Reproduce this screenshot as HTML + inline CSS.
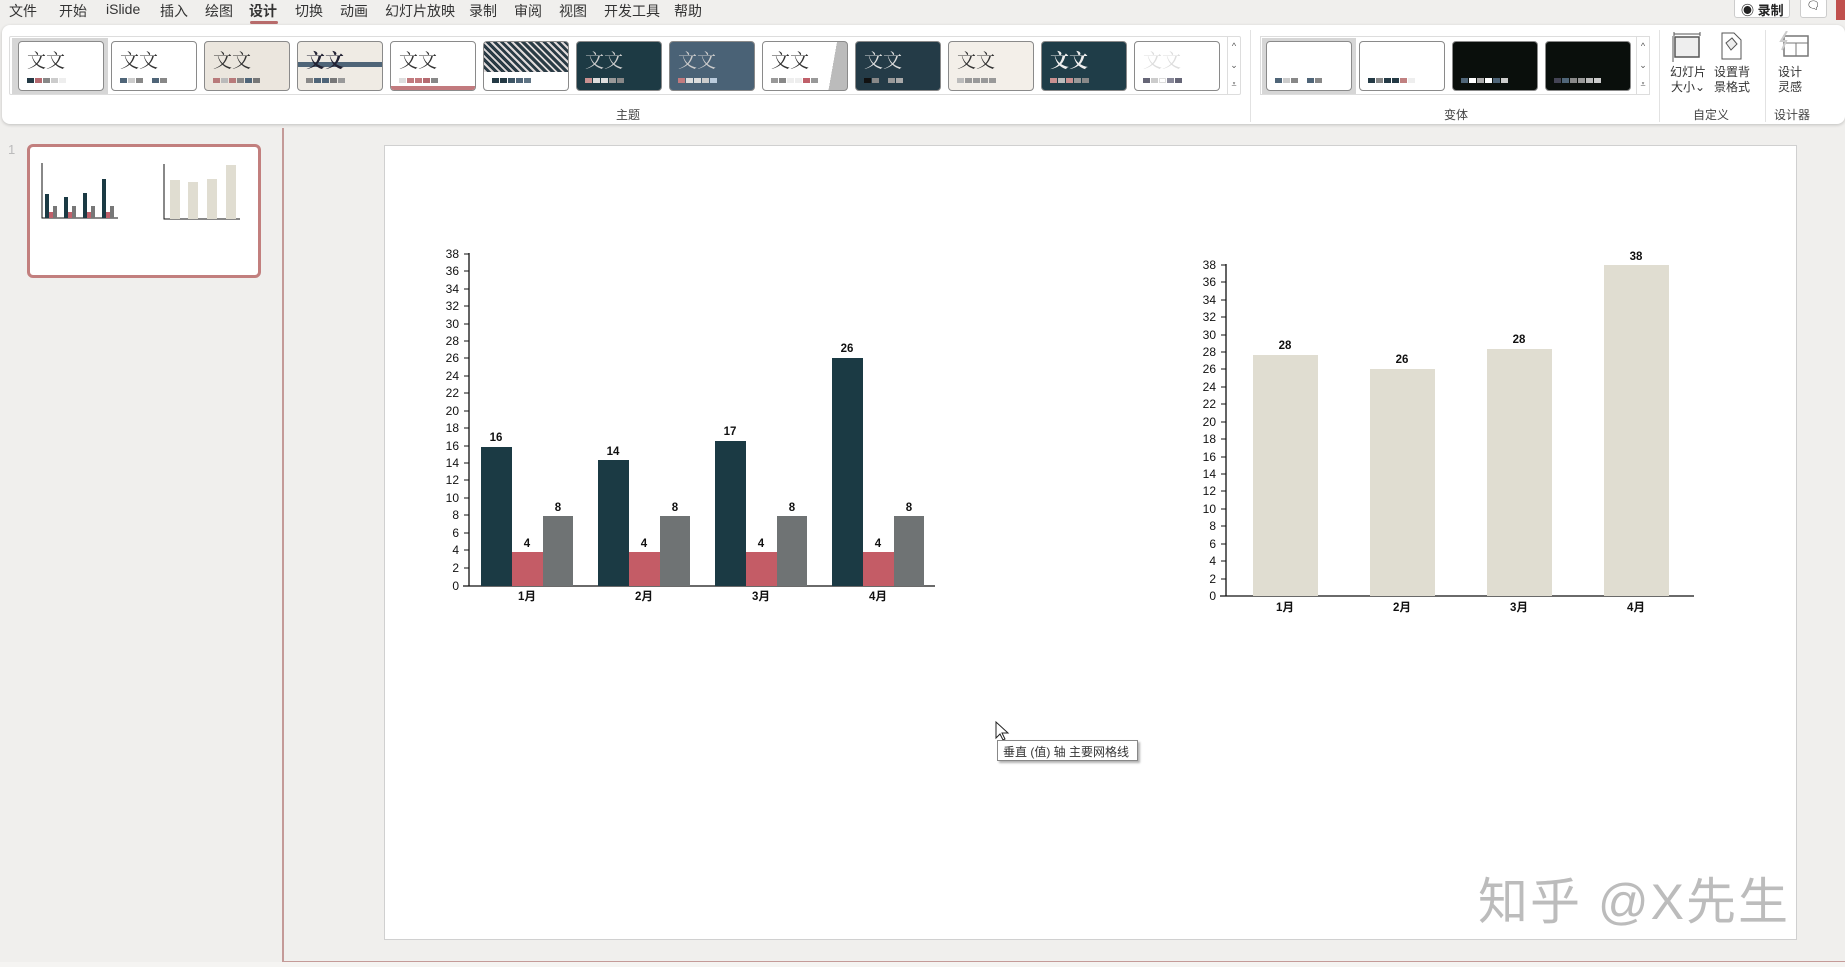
<!DOCTYPE html>
<html><head><meta charset="utf-8"><style>
*{margin:0;padding:0;box-sizing:border-box}
body{width:1845px;height:967px;overflow:hidden;background:#f0efed;font-family:"Liberation Sans","Noto Sans CJK SC",sans-serif;position:relative;color:#222}
.a{position:absolute}
.tab{position:absolute;top:1px;font-size:14px;color:#333;white-space:nowrap}
.th{position:absolute;top:41px;width:86px;height:50px;border:1px solid #8a8a8a;border-radius:4px;overflow:hidden;background:#fff}
.th .t{position:absolute;left:8px;top:4px;font-family:"Noto Serif CJK SC",serif;font-size:19px;color:#333}
.th .s{position:absolute;left:8px;top:36px;height:5px;display:flex;gap:1px}
.th .s i{display:block;width:7px;height:5px}
.gl{position:absolute;top:106px;font-size:12px;color:#444}
.sm{position:absolute;font-size:12px;color:#333;line-height:15px;text-align:center}
</style></head><body>
<!-- menu -->
<div class="tab" style="left:9px">文件</div>
<div class="tab" style="left:59px">开始</div>
<div class="tab" style="left:106px">iSlide</div>
<div class="tab" style="left:160px">插入</div>
<div class="tab" style="left:205px">绘图</div>
<div class="tab" style="left:249px;font-weight:bold">设计</div>
<div class="a" style="left:250px;top:21px;width:28px;height:3px;background:#b86b6b;border-radius:2px"></div>
<div class="tab" style="left:295px">切换</div>
<div class="tab" style="left:340px">动画</div>
<div class="tab" style="left:385px">幻灯片放映</div>
<div class="tab" style="left:469px">录制</div>
<div class="tab" style="left:514px">审阅</div>
<div class="tab" style="left:559px">视图</div>
<div class="tab" style="left:604px">开发工具</div>
<div class="tab" style="left:674px">帮助</div>
<div class="a" style="left:1734px;top:-2px;width:56px;height:20px;border:1px solid #ccc;border-radius:3px;background:#fff;font-size:13px;font-weight:bold;padding:1px 0 0 6px">◉ 录制</div>
<div class="a" style="left:1800px;top:-2px;width:27px;height:20px;border:1px solid #ccc;border-radius:3px;background:#fff;font-size:11px;text-align:center">🗨</div>
<div class="a" style="left:1836px;top:0;width:9px;height:20px;background:#c0504d"></div>
<!-- ribbon -->
<div class="a" style="left:2px;top:25px;width:1843px;height:99px;background:#fff;border-radius:8px;box-shadow:0 1px 3px rgba(0,0,0,.2)"></div>
<div class="a" style="left:9px;top:36px;width:1232px;height:59px;border:1px solid #ddd;border-radius:2px"></div>
<div class="a" style="left:12px;top:38px;width:96px;height:56px;background:#d6d6d6"></div>
<div class="th" style="left:18px"><span class="t">文文</span><span class="s"><i style="background:#243a45"></i><i style="background:#b56a70"></i><i style="background:#888"></i><i style="background:#ccc"></i><i style="background:#eee"></i></span></div>
<div class="th" style="left:111px"><span class="t">文文</span><span class="s"><i style="background:#4f6578"></i><i style="background:#ccc"></i><i style="background:#888"></i><i style="background:#fff"></i><i style="background:#4f6578"></i><i style="background:#888"></i></span></div>
<div class="th" style="left:204px;background:#ebe6de"><span class="t">文文</span><span class="s"><i style="background:#b87a7a"></i><i style="background:#bbb"></i><i style="background:#b87a7a"></i><i style="background:#888"></i><i style="background:#4f6578"></i><i style="background:#777"></i></span></div>
<div class="th" style="left:297px;background:#efebe4"><div class="a" style="left:0;top:20px;width:86px;height:5px;background:#4f6578"></div><span class="t" style="font-weight:bold;color:#223">文文</span><span class="s"><i style="background:#888"></i><i style="background:#4f6578"></i><i style="background:#4f6578"></i><i style="background:#777"></i><i style="background:#999"></i></span></div>
<div class="th" style="left:390px"><div class="a" style="left:0;bottom:0;width:86px;height:4px;background:#c27a7e"></div><span class="t">文文</span><span class="s"><i style="background:#ddd"></i><i style="background:#c27a7e"></i><i style="background:#c27a7e"></i><i style="background:#b56a70"></i><i style="background:#888"></i></span></div>
<div class="th" style="left:483px;background:repeating-linear-gradient(45deg,#2a3b45 0 3px,#e0dada 3px 5px),#ccc"><div class="a" style="left:0;top:30px;width:86px;height:20px;background:#fff"></div><span class="s"><i style="background:#243a45"></i><i style="background:#243a45"></i><i style="background:#3d5565"></i><i style="background:#4f6578"></i><i style="background:#607585"></i></span></div>
<div class="th" style="left:576px;background:#1d3a44"><span class="t" style="color:#ccc">文文</span><span class="s"><i style="background:#c89090"></i><i style="background:#ddd"></i><i style="background:#ddd"></i><i style="background:#999"></i><i style="background:#888"></i></span></div>
<div class="th" style="left:669px;background:#4a6276"><span class="t" style="color:#ccc">文文</span><span class="s"><i style="background:#c27a7e"></i><i style="background:#ddd"></i><i style="background:#ddd"></i><i style="background:#ccc"></i><i style="background:#bcd"></i></span></div>
<div class="th" style="left:762px;background:linear-gradient(100deg,#fff 80%,#bbb 80%)"><span class="t">文文</span><span class="s"><i style="background:#999"></i><i style="background:#888"></i><i style="background:#eee"></i><i style="background:#eee"></i><i style="background:#c0606a"></i><i style="background:#999"></i></span></div>
<div class="th" style="left:855px;background:#243b47"><span class="t" style="color:#ddd">文文</span><span class="s"><i style="background:#111"></i><i style="background:#888"></i><i style="background:#243b47"></i><i style="background:#999"></i><i style="background:#aaa"></i></span></div>
<div class="th" style="left:948px;background:#f3efe9"><span class="t">文文</span><span class="s"><i style="background:#bbb"></i><i style="background:#999"></i><i style="background:#999"></i><i style="background:#999"></i><i style="background:#999"></i></span></div>
<div class="th" style="left:1041px;background:#1f3d48"><span class="t" style="color:#eee;font-weight:bold">文文</span><span class="s"><i style="background:#c89090"></i><i style="background:#bbb"></i><i style="background:#c89090"></i><i style="background:#999"></i><i style="background:#888"></i></span></div>
<div class="th" style="left:1134px"><span class="t" style="color:#ddd">文文</span><span class="s"><i style="background:#667"></i><i style="background:#ccc"></i><i style="background:#fff;border:1px solid #ddd"></i><i style="background:#889"></i><i style="background:#667"></i></span></div>
<div class="a" style="left:1227px;top:37px;width:13px;height:57px;border-left:1px solid #ddd;font-size:9px;color:#555;line-height:19px;text-align:center">^<br>⌄<br>⩡</div>
<div class="gl" style="left:616px">主题</div>
<div class="a" style="left:1250px;top:30px;width:1px;height:92px;background:#e2e2e2"></div>
<div class="a" style="left:1260px;top:36px;width:390px;height:59px;border:1px solid #ddd"></div>
<div class="a" style="left:1262px;top:38px;width:94px;height:56px;background:#d6d6d6"></div>
<div class="th" style="left:1266px"><span class="s"><i style="background:#4f6578"></i><i style="background:#ccc"></i><i style="background:#888"></i><i style="background:#fff"></i><i style="background:#4f6578"></i><i style="background:#888"></i></span></div>
<div class="th" style="left:1359px"><span class="s"><i style="background:#243a45"></i><i style="background:#888"></i><i style="background:#243a45"></i><i style="background:#243a45"></i><i style="background:#c08080"></i><i style="background:#eee"></i></span></div>
<div class="th" style="left:1452px;background:#0a0f0c"><span class="s"><i style="background:#4f6578"></i><i style="background:#fff"></i><i style="background:#aaa"></i><i style="background:#fff"></i><i style="background:#4f6578"></i><i style="background:#ccc"></i></span></div>
<div class="th" style="left:1545px;background:#0a0f0c"><span class="s"><i style="background:#445"></i><i style="background:#4f6578"></i><i style="background:#888"></i><i style="background:#999"></i><i style="background:#bbb"></i><i style="background:#ccc"></i></span></div>
<div class="a" style="left:1636px;top:37px;width:13px;height:57px;border-left:1px solid #ddd;font-size:9px;color:#555;line-height:19px;text-align:center">^<br>⌄<br>⩡</div>
<div class="gl" style="left:1444px">变体</div>
<div class="a" style="left:1659px;top:30px;width:1px;height:92px;background:#e2e2e2"></div>
<svg class="a" style="left:1672px;top:32px" width="30" height="30"><rect x="3" y="5" width="24" height="20" fill="#eee" stroke="#555" stroke-width="1.5"/><path d="M2 2h26M2 0v4M28 0v4M1 4v26" stroke="#555" fill="none"/></svg>
<svg class="a" style="left:1718px;top:31px" width="26" height="30"><path d="M4 2h12l7 7v19H4z" fill="#fff" stroke="#555"/><path d="M8 12l6-5 5 6-6 6z" fill="#eee" stroke="#555"/></svg>
<div class="sm" style="left:1670px;top:65px">幻灯片<br>大小⌄</div>
<div class="sm" style="left:1714px;top:65px">设置背<br>景格式</div>
<div class="gl" style="left:1693px">自定义</div>
<div class="a" style="left:1765px;top:30px;width:1px;height:92px;background:#e2e2e2"></div>
<svg class="a" style="left:1778px;top:31px" width="32" height="30"><rect x="6" y="5" width="24" height="20" fill="#fff" stroke="#777" stroke-width="1.5"/><path d="M6 12h24M18 12v13" stroke="#777"/><path d="M9 0l-6 10h5l-4 9" stroke="#ccc" stroke-width="2" fill="none"/></svg>
<div class="sm" style="left:1778px;top:65px">设计<br>灵感</div>
<div class="gl" style="left:1774px">设计器</div>
<!-- left panel -->
<div class="a" style="left:8px;top:142px;font-size:13px;color:#bbb">1</div>
<div class="a" style="left:282px;top:128px;width:1.5px;height:833px;background:#c49a98"></div>
<div class="a" style="left:27px;top:144px;width:234px;height:134px;border:3px solid #c27f7e;border-radius:6px;background:#fff"></div>
<svg class="a" style="left:40px;top:160px" width="210" height="60">
<path d="M2 3v55h76" stroke="#111" fill="none"/>
<rect x="5" y="34" width="4" height="24" fill="#1b3a44"/><rect x="9" y="52" width="4" height="6" fill="#c0606a"/><rect x="13" y="46" width="4" height="12" fill="#777"/>
<rect x="24" y="37" width="4" height="21" fill="#1b3a44"/><rect x="28" y="52" width="4" height="6" fill="#c0606a"/><rect x="32" y="46" width="4" height="12" fill="#777"/>
<rect x="43" y="33" width="4" height="25" fill="#1b3a44"/><rect x="47" y="52" width="4" height="6" fill="#c0606a"/><rect x="51" y="46" width="4" height="12" fill="#777"/>
<rect x="62" y="19" width="4" height="39" fill="#1b3a44"/><rect x="66" y="52" width="4" height="6" fill="#c0606a"/><rect x="70" y="46" width="4" height="12" fill="#777"/>
<path d="M124 4v55h76" stroke="#111" fill="none"/>
<rect x="130" y="20" width="10" height="39" fill="#e0ddd1"/><rect x="148" y="22" width="10" height="37" fill="#e0ddd1"/><rect x="167" y="19" width="10" height="40" fill="#e0ddd1"/><rect x="186" y="5" width="10" height="54" fill="#e0ddd1"/>
</svg>
<!-- slide -->
<div class="a" style="left:384px;top:145px;width:1413px;height:795px;background:#fff;border:1px solid #d0d0d0"></div>
<svg class="a" style="left:0;top:0" width="1845" height="967" font-family="Liberation Sans,Noto Sans CJK SC,sans-serif" font-size="12" fill="#111">
<g id="L">
<path d="M469 253V586M463 586H935" stroke="#111" stroke-width="1.3" fill="none"/>
<g stroke="#111" stroke-width="1">
<path d="M464 254h5M464 271h5M464 289h5M464 306h5M464 324h5M464 341h5M464 358h5M464 376h5M464 393h5M464 411h5M464 428h5M464 446h5M464 463h5M464 480h5M464 498h5M464 515h5M464 533h5M464 550h5M464 568h5"/>
</g>
<g text-anchor="end">
<text x="459" y="258">38</text><text x="459" y="275">36</text><text x="459" y="293">34</text><text x="459" y="310">32</text><text x="459" y="328">30</text><text x="459" y="345">28</text><text x="459" y="362">26</text><text x="459" y="380">24</text><text x="459" y="397">22</text><text x="459" y="415">20</text><text x="459" y="432">18</text><text x="459" y="450">16</text><text x="459" y="467">14</text><text x="459" y="484">12</text><text x="459" y="502">10</text><text x="459" y="519">8</text><text x="459" y="537">6</text><text x="459" y="554">4</text><text x="459" y="572">2</text><text x="459" y="590">0</text>
</g>
<rect x="481" y="447" width="31" height="139" fill="#1b3a44"/><rect x="512" y="552" width="31" height="34" fill="#c45c66"/><rect x="543" y="516" width="30" height="70" fill="#6f7374"/>
<rect x="598" y="460" width="31" height="126" fill="#1b3a44"/><rect x="629" y="552" width="31" height="34" fill="#c45c66"/><rect x="660" y="516" width="30" height="70" fill="#6f7374"/>
<rect x="715" y="441" width="31" height="145" fill="#1b3a44"/><rect x="746" y="552" width="31" height="34" fill="#c45c66"/><rect x="777" y="516" width="30" height="70" fill="#6f7374"/>
<rect x="832" y="358" width="31" height="228" fill="#1b3a44"/><rect x="863" y="552" width="31" height="34" fill="#c45c66"/><rect x="894" y="516" width="30" height="70" fill="#6f7374"/>
<g text-anchor="middle" font-weight="bold" font-size="11.5">
<text x="496" y="441">16</text><text x="527" y="547">4</text><text x="558" y="511">8</text>
<text x="613" y="455">14</text><text x="644" y="547">4</text><text x="675" y="511">8</text>
<text x="730" y="435">17</text><text x="761" y="547">4</text><text x="792" y="511">8</text>
<text x="847" y="352">26</text><text x="878" y="547">4</text><text x="909" y="511">8</text>
<text x="527" y="600">1月</text><text x="644" y="600">2月</text><text x="761" y="600">3月</text><text x="878" y="600">4月</text>
</g>
</g>
<g>
<path d="M1226 264V596M1220 596H1694" stroke="#111" stroke-width="1.3" fill="none"/>
<g stroke="#111"><path d="M1221 265h5M1221 282h5M1221 300h5M1221 317h5M1221 335h5M1221 352h5M1221 369h5M1221 387h5M1221 404h5M1221 422h5M1221 439h5M1221 457h5M1221 474h5M1221 491h5M1221 509h5M1221 526h5M1221 544h5M1221 561h5M1221 579h5"/></g>
<g text-anchor="end">
<text x="1216" y="269">38</text><text x="1216" y="286">36</text><text x="1216" y="304">34</text><text x="1216" y="321">32</text><text x="1216" y="339">30</text><text x="1216" y="356">28</text><text x="1216" y="373">26</text><text x="1216" y="391">24</text><text x="1216" y="408">22</text><text x="1216" y="426">20</text><text x="1216" y="443">18</text><text x="1216" y="461">16</text><text x="1216" y="478">14</text><text x="1216" y="495">12</text><text x="1216" y="513">10</text><text x="1216" y="530">8</text><text x="1216" y="548">6</text><text x="1216" y="565">4</text><text x="1216" y="583">2</text><text x="1216" y="600">0</text>
</g>
<rect x="1253" y="355" width="65" height="241" fill="#e0ddd1"/><rect x="1370" y="369" width="65" height="227" fill="#e0ddd1"/><rect x="1487" y="349" width="65" height="247" fill="#e0ddd1"/><rect x="1604" y="265" width="65" height="331" fill="#e0ddd1"/>
<g text-anchor="middle" font-weight="bold" font-size="11.5">
<text x="1285" y="349">28</text><text x="1402" y="363">26</text><text x="1519" y="343">28</text><text x="1636" y="260">38</text>
<text x="1285" y="611">1月</text><text x="1402" y="611">2月</text><text x="1519" y="611">3月</text><text x="1636" y="611">4月</text>
</g>
</g>
<path d="M996 722v16l4-4 3 6 2-1-3-6h6z" fill="#fff" stroke="#222" stroke-width="1"/>
</svg>
<div class="a" style="left:997px;top:740px;width:141px;height:21px;background:#fff;border:1px solid #888;box-shadow:2px 2px 2px rgba(0,0,0,.3);font-size:12px;color:#333;padding:2px 0 0 5px;white-space:nowrap">垂直 (值) 轴 主要网格线</div>
<div class="a" style="left:1478px;top:862px;font-size:50px;color:#bcbcbc;white-space:nowrap;letter-spacing:2px;font-family:'Liberation Sans','Noto Sans CJK SC',sans-serif">知乎 @X先生</div>
<div class="a" style="left:282px;top:961px;width:1563px;height:1px;background:#c49a98"></div>
<div class="a" style="left:0;top:962px;width:1845px;height:5px;background:#f5f4f2"></div>
</body></html>
